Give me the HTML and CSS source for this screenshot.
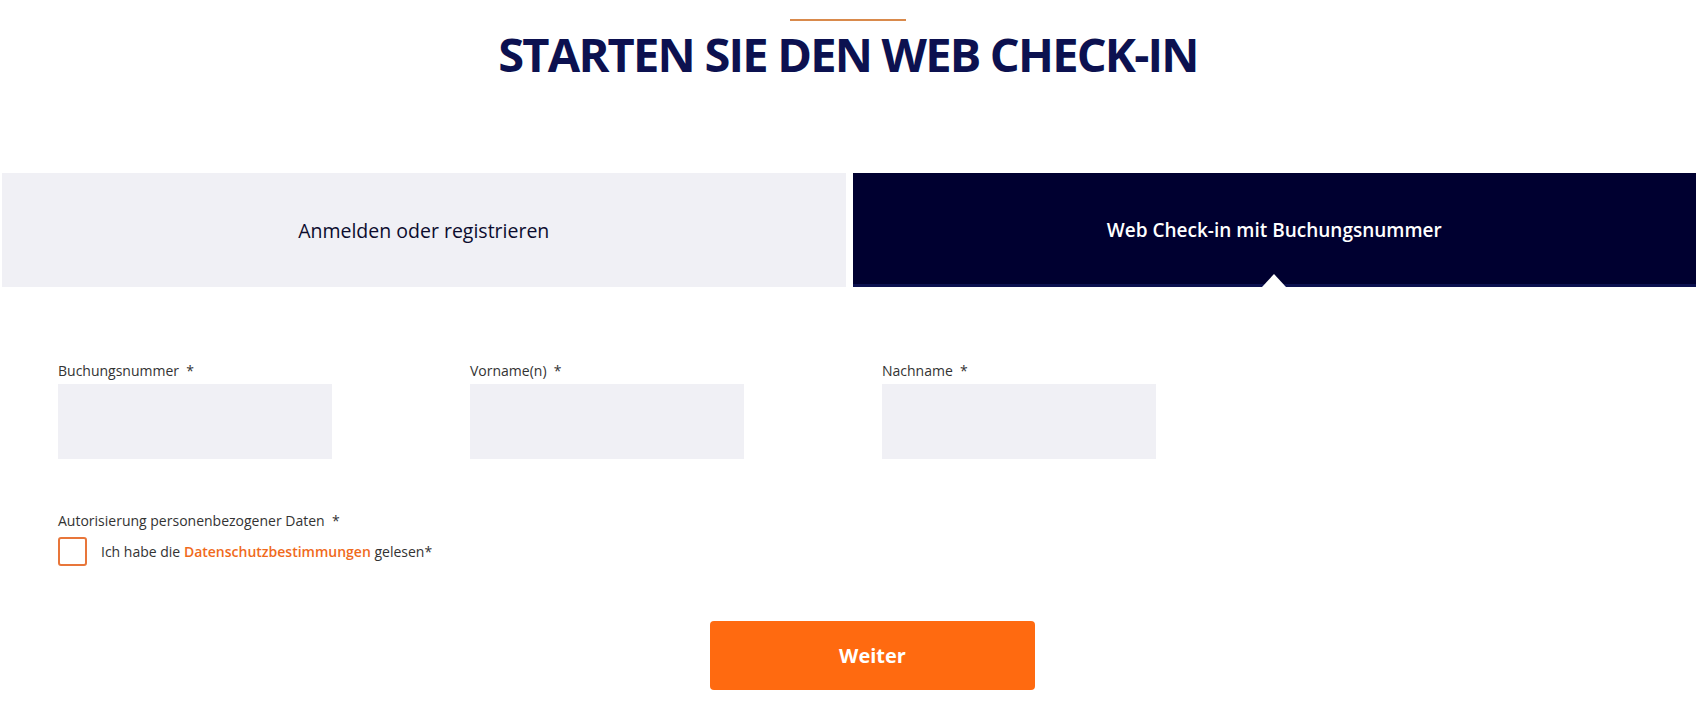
FILE: index.html
```html
<!DOCTYPE html>
<html lang="de">
<head>
    <meta charset="UTF-8">
    <meta name="viewport" content="width=device-width, initial-scale=1.0">
    <title>Web Check-in</title>
    <link rel="stylesheet" href="styles.css">
</head>
<body>

    <header class="page-head">
        <span class="head-line"></span>
        <h1>Starten Sie den Web Check-in</h1>
    </header>

    <div class="tabs">
        <a class="tab" href="#">Anmelden oder registrieren</a>
        <a class="tab active" href="#">Web Check-in mit Buchungsnummer</a>
    </div>

    <form class="checkin">
        <div class="fields">
            <div class="field">
                <label for="booking">Buchungsnummer&nbsp; *</label>
                <input type="text" id="booking">
            </div>
            <div class="field">
                <label for="firstname">Vorname(n)&nbsp; *</label>
                <input type="text" id="firstname">
            </div>
            <div class="field">
                <label for="lastname">Nachname&nbsp; *</label>
                <input type="text" id="lastname">
            </div>
        </div>

        <div class="consent">
            <p class="consent-title">Autorisierung personenbezogener Daten&nbsp; *</p>
            <label class="check">
                <span class="box"></span>
                <span>Ich habe die <a href="#">Datenschutzbestimmungen</a> gelesen*</span>
            </label>
        </div>

        <div class="actions">
            <button type="button">Weiter</button>
        </div>
    </form>

</body>
</html>
```

FILE: styles.css
```css
body {
    font-family: 'Open Sans', 'Noto Sans', sans-serif;
    background-color: #fff;
    color: #333;
    margin: 0;
    padding: 0;
}
.page-head {
    text-align: center;
    padding-top: 19px;
}
.head-line {
    display: block;
    width: 116px;
    height: 2px;
    margin: 0 auto;
    background-color: #d98a4c;
}
.page-head h1 {
    margin: 3px 0 0;
    font-size: 47px;
    line-height: 60px;
    font-weight: 700;
    text-transform: uppercase;
    color: #0c1150;
    letter-spacing: -1.8px;
}
.tabs {
    display: grid;
    grid-template-columns: 1fr 1fr;
    gap: 7px;
    padding-left: 2px;
    margin-top: 89px;
}
.tab {
    position: relative;
    display: flex;
    align-items: center;
    justify-content: center;
    height: 114px;
    background-color: #f0f0f5;
    color: #0c0c2e;
    font-size: 19.5px;
    font-weight: 500;
    text-decoration: none;
}
.tab.active {
    background-color: #000030;
    color: #fff;
    font-weight: 600;
    font-size: 19px;
    box-shadow: inset 0 -3px 0 #0c1150;
}
.tab.active::after {
    content: '';
    position: absolute;
    bottom: 0;
    left: 50%;
    margin-left: -12px;
    border-left: 12px solid transparent;
    border-right: 12px solid transparent;
    border-bottom: 13px solid #fff;
}
.checkin {
    padding: 74px 58px 0;
}
.fields {
    display: flex;
    gap: 138px;
}
.field {
    display: flex;
    flex-direction: column;
    width: 274px;
}
.field label,
.consent-title {
    font-size: 14px;
    line-height: 19px;
    color: #333;
}
.field input {
    margin-top: 4px;
    height: 75px;
    border: none;
    background-color: #f0f0f5;
    padding: 0 12px;
    font-family: inherit;
    font-size: 16px;
}
.consent {
    margin-top: 52px;
}
.consent-title {
    margin: 0;
}
.check {
    display: flex;
    align-items: center;
    gap: 14px;
    margin-top: 7px;
    font-size: 14px;
    color: #333;
}
.box {
    width: 25px;
    height: 25px;
    border: 2px solid #e8763a;
    border-radius: 3px;
}
.check a {
    color: #f06a1c;
    font-weight: 600;
    text-decoration: none;
}
.actions {
    padding-left: 652px;
    margin-top: 55px;
}
.actions button {
    width: 325px;
    height: 69px;
    background-color: #ff6a10;
    color: white;
    border: none;
    border-radius: 4px;
    font-family: inherit;
    font-size: 20px;
    font-weight: 700;
    cursor: pointer;
}
```
